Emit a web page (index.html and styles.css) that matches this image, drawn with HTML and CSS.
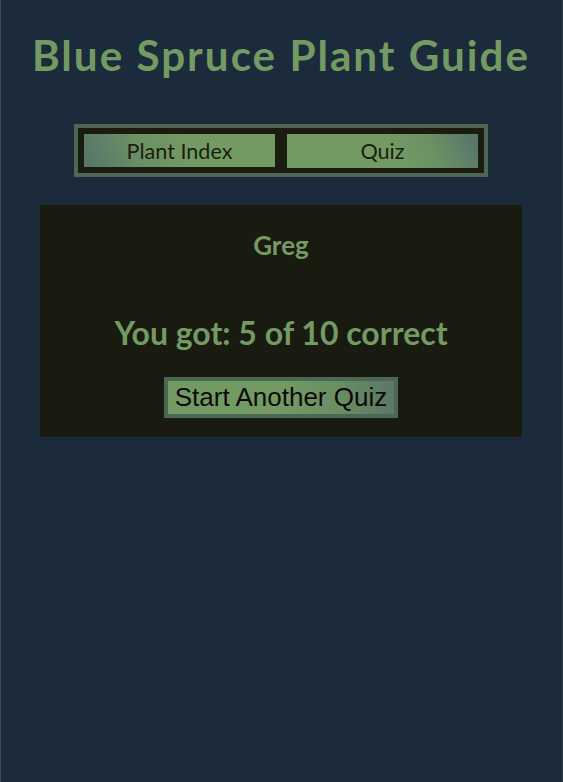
FILE: index.html
```html
<!DOCTYPE html>
<html lang="en">
<head>
<meta charset="utf-8">
<title>Blue Spruce Plant Guide</title>
<link rel="stylesheet" href="styles.css">
</head>
<body>
<header class="site-header">
  <h1 class="site-title">Blue Spruce Plant Guide</h1>
  <nav class="nav">
    <button class="nav-btn nav-btn-index">Plant Index</button>
    <button class="nav-btn nav-btn-quiz">Quiz</button>
  </nav>
</header>
<main class="result-card">
  <h2 class="player-name">Greg</h2>
  <p class="score">You got: 5 of 10 correct</p>
  <button class="restart-btn">Start Another Quiz</button>
</main>
</body>
</html>
```

FILE: styles.css
```css
html, body {
  margin: 0;
  padding: 0;
}
body {
  background: #1c2b3b;
  min-height: 782px;
  box-sizing: border-box;
  padding-right: 1px;
  box-shadow: inset 1px 0 0 #3a4753, inset -1px 0 0 #2c3a48;
  font-family: Lato, "Liberation Sans", sans-serif;
  display: flex;
  flex-direction: column;
  align-items: center;
}
.site-header {
  display: flex;
  flex-direction: column;
  align-items: center;
}
.site-title {
  margin: 30px 0 0;
  font-size: 42.2px;
  line-height: 50px;
  font-weight: 700;
  letter-spacing: 2px;
  color: #739a63;
}
.nav {
  margin-top: 44px;
  width: 414px;
  box-sizing: border-box;
  border: 4px solid #4e6656;
  background: #1a1c10;
  padding: 6px 6px 5px 6px;
  display: flex;
  align-items: flex-start;
  gap: 12px;
}
.nav-btn {
  width: 191px;
  height: 33px;
  border: 0;
  padding: 0;
  margin: 0;
  font-family: Lato, "Liberation Sans", sans-serif;
  font-size: 21.6px;
  color: #1b1d10;
}
.nav-btn-index {
  background: linear-gradient(65deg, #56736a 0%, #6b9064 30%, #739a63 55%, #739a63 100%);
}
.nav-btn-quiz {
  height: 34px;
  background: linear-gradient(65deg, #739a63 0%, #739a63 55%, #6b9064 75%, #56736a 100%);
}
.result-card {
  margin-top: 28px;
  width: 482px;
  box-sizing: border-box;
  background: #191b10;
  padding: 25px 0 19px;
  display: flex;
  flex-direction: column;
  align-items: center;
}
.player-name {
  margin: 0;
  font-size: 26px;
  line-height: 31px;
  font-weight: 700;
  color: #739a63;
}
.score {
  margin: 53px 0 0;
  font-size: 32px;
  line-height: 38px;
  font-weight: 700;
  color: #739a63;
}
.restart-btn {
  margin-top: 25px;
  border: 4px solid #4e6656;
  padding: 0 7px;
  height: 41px;
  background: linear-gradient(90deg, #739a63 0%, #739a63 50%, #6a8e63 75%, #5a7866 100%);
  font-family: "Liberation Sans", Arial, sans-serif;
  font-size: 26px;
  color: #0a0a0a;
}
```
